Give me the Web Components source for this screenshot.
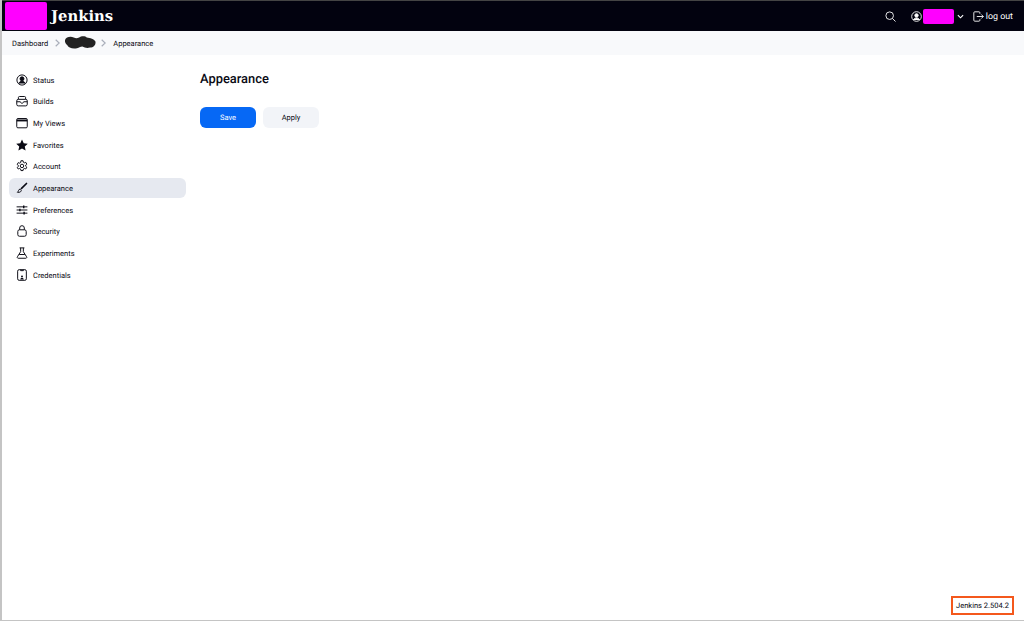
<!DOCTYPE html>
<html>
<head>
<meta charset="utf-8">
<title>Appearance - Jenkins</title>
<style>
html, body { margin: 0; height: 100%; background: #fff; }
body { font-family: Roboto, "Noto Sans", sans-serif; color: #0a0a14; text-rendering: geometricPrecision; }
</style>
</head>
<body>
<jenkins-page>
  <jenkins-header slot="header"></jenkins-header>
  <jenkins-breadcrumbs slot="crumbs"></jenkins-breadcrumbs>
  <side-nav slot="side">
    <nav-item label="Status" icon="status"></nav-item>
    <nav-item label="Builds" icon="builds"></nav-item>
    <nav-item label="My Views" icon="views"></nav-item>
    <nav-item label="Favorites" icon="star"></nav-item>
    <nav-item label="Account" icon="gear"></nav-item>
    <nav-item label="Appearance" icon="brush" active></nav-item>
    <nav-item label="Preferences" icon="sliders"></nav-item>
    <nav-item label="Security" icon="lock"></nav-item>
    <nav-item label="Experiments" icon="flask"></nav-item>
    <nav-item label="Credentials" icon="device"></nav-item>
  </side-nav>
  <appearance-form slot="main"></appearance-form>
  <version-tag slot="footer">Jenkins 2.504.2</version-tag>
</jenkins-page>

<script>
const icons = {
    status: '<circle cx="8" cy="8" r="6.800"/><circle cx="8" cy="6.400" r="2.600" fill="currentColor"/><path d="M3.600 12.800c.8-2.100 2.400-3 4.400-3s3.600.9 4.400 3" fill="currentColor"/>',
    builds: '<rect x="1" y="5.800" width="14" height="8.700" rx="2"/><path d="M3.200 5.600V3.400c0-.9.5-1.400 1.400-1.400h6.800c.9 0 1.400.5 1.400 1.400v2.200M1 9h4.800c.3 1.300 1.100 2 2.200 2s1.900-.7 2.200-2H15"/>',
    views: '<rect x="1" y="2" width="14" height="12.400" rx="1.500"/><path d="M1 4.600h14" stroke-width="2.600"/>',
    star: '<path d="M8 .6l2.300 5 5.400.6-4 3.700 1.100 5.400L8 12.600l-4.800 2.700 1.100-5.400-4-3.700 5.400-.6z" fill="currentColor" stroke="none"/>',
    gear: '<path d="M6.600 1h2.800l.4 2 1.300.8 1.900-.7 1.400 2.400-1.500 1.300v1.500l1.500 1.300-1.400 2.400-1.900-.7-1.300.8-.4 2H6.600l-.4-2-1.300-.8-1.900.7L1.600 10l1.500-1.300V7.200L1.600 5.900 3 3.500l1.900.7 1.300-.8z" stroke-linejoin="round"/><circle cx="8" cy="7.900" r="2.300"/>',
    brush: '<path d="M14 2L7.400 8.600" stroke-width="2.200" stroke-linecap="round"/><path d="M5.600 9.400c-1.400.2-2 1-2.300 2-.2.900-.6 1.700-1.500 2.300 1.700.4 3.400.1 4.400-.8.900-.8 1.100-1.800.5-2.600z" stroke-width="1.300"/>',
    sliders: '<path d="M.8 3.800h14.400M.8 8h14.400M.8 12.200h14.400"/><path d="M10.300 2v3.600M5.200 6.200v3.600M10.800 10.400V14" stroke-width="1.900"/>',
    lock: '<rect x="2.400" y="6.400" width="11.200" height="8.600" rx="2.200"/><path d="M4.900 6.400V4a3.100 3.100 0 0 1 6.200 0v2.400"/>',
    flask: '<path d="M4.800 1.200h6.400M6.200 1.200v5L1.900 13c-.6 1 0 2 1 2h10.200c1 0 1.600-1 1-2L9.800 6.200v-5M4.200 10h7.600"/>',
    device: '<rect x="2.200" y=".9" width="11.600" height="14.200" rx="2"/><path d="M6.200 1v1.200h3.600V1"/><circle cx="8" cy="9.800" r="1.300" fill="currentColor" stroke="none"/><path d="M5.600 14c.3-1.700 1.200-2.500 2.400-2.500s2.100.8 2.400 2.500z" fill="currentColor" stroke="none"/>'
}

class JenkinsPage extends HTMLElement {
    constructor() {
        super()
        this.root = this.attachShadow({mode: 'open'})
        this.root.innerHTML = `
            <style>
            :host { display: flex; flex-direction: column; height: 621px; box-sizing: border-box;
                    border-left: 2px solid #c4c4c4; border-bottom: 1px solid #c4c4c4; overflow: hidden; }
            .body { display: flex; flex: 1; min-height: 0; padding: 14.700px 0 0 7px; }
            .side { width: 177px; flex: none; }
            .main { flex: 1; padding-left: 14px; }
            .foot { display: flex; justify-content: flex-end; padding: 0 10px 5px 0; }
            </style>
            <slot name="header"></slot>
            <slot name="crumbs"></slot>
            <div class="body">
                <div class="side"><slot name="side"></slot></div>
                <div class="main"><slot name="main"></slot></div>
            </div>
            <div class="foot"><slot name="footer"></slot></div>
        `
    }
}

class JenkinsHeader extends HTMLElement {
    constructor() {
        super()
        this.root = this.attachShadow({mode: 'open'})
        this.root.innerHTML = `
            <style>
            :host { display: flex; align-items: center; height: 31px; box-sizing: border-box; flex: none;
                    background: #02020f; color: #fff; border-top: 1px solid #444; padding-left: 3px; }
            .logo { width: 42px; height: 28px; background: #ff00ff; border-radius: 2px; }
            .brand { font: bold 14.800px "DejaVu Serif", "Liberation Serif", serif; margin-left: 4px; }
            .right { margin-left: auto; display: flex; align-items: center; font-size: 8.900px; padding-right: 11px; }
            svg { display: block; fill: none; stroke: currentColor; stroke-width: 1.300; flex: none; }
            .search { margin-right: 15px; }
            .name { width: 31px; height: 15px; background: #ff00ff; border-radius: 2px; margin-left: 1px; }
            .caret { margin: 0 9px 0 3px; }
            .out { margin: 1px 0 0 2px; }
            </style>
            <div class="logo"></div>
            <div class="brand">Jenkins</div>
            <div class="right">
                <svg class="search" width="11" height="11" viewBox="0 0 16 16"><circle cx="6.800" cy="6.800" r="5.500"/><path d="M11 11l4.300 4.300"/></svg>
                <svg width="11" height="11" viewBox="0 0 16 16"><circle cx="8" cy="8" r="7"/><circle cx="8" cy="6.400" r="2.500" fill="currentColor"/><path d="M3.500 13c.8-2 2.500-3 4.500-3s3.700 1 4.500 3" fill="currentColor"/></svg>
                <div class="name"></div>
                <svg class="caret" width="7" height="7" viewBox="0 0 16 16" style="stroke-width:2.600"><path d="M2 5l6 6 6-6"/></svg>
                <svg width="11" height="11" viewBox="0 0 16 16"><path d="M10 4V2.500C10 1.700 9.500 1.200 8.700 1.200H2.500c-.8 0-1.300.5-1.300 1.300v11c0 .8.500 1.300 1.300 1.300h6.200c.8 0 1.300-.5 1.300-1.300V12M5.500 8h9.500M12 5l3 3-3 3"/></svg>
                <span class="out">log out</span>
            </div>
        `
    }
}

class JenkinsBreadcrumbs extends HTMLElement {
    constructor() {
        super()
        this.root = this.attachShadow({mode: 'open'})
        this.root.innerHTML = `
            <style>
            :host { display: flex; align-items: center; height: 24px; flex: none; background: #f8f9fb;
                    font-size: 7.500px; padding-left: 10px; color: #0a0a14; }
            svg { display: block; fill: none; stroke: #a9aeba; stroke-width: 1.200; flex: none; }
            .sep1 { margin: 0 5px 0 7px; }
            .blob { margin-right: 5px; }
            .sep2 { margin-right: 7px; }
            </style>
            <span>Dashboard</span>
            <svg class="sep1" width="5" height="8" viewBox="0 0 5 8"><path d="M.7.7L4.200 4 .7 7.300"/></svg>
            <svg class="blob" width="31" height="16" viewBox="1 0 28.500 16" preserveAspectRatio="none" style="stroke:none"><path d="M1 5c1-3 5-4 8-2.500 2 1 3 1 5 0 2-1.800 6-1.500 7 0 3 .5 7 1.500 8 4 .5 3-1.500 6-5 6-3 1-5 0-7-1-2 0-3 1.500-6 2-4 .5-7-1-8-3.500C2 9 .5 7 1 5z" fill="#222"/></svg>
            <svg class="sep2" width="5" height="8" viewBox="0 0 5 8"><path d="M.7.7L4.200 4 .7 7.300"/></svg>
            <span>Appearance</span>
        `
    }
}

class SideNav extends HTMLElement {
    constructor() {
        super()
        this.root = this.attachShadow({mode: 'open'})
        this.root.innerHTML = `
            <style>:host { display: flex; flex-direction: column; gap: 1.670px; }</style>
            <slot></slot>
        `
    }
}

class NavItem extends HTMLElement {
    constructor() {
        super()
        this.root = this.attachShadow({mode: 'open'})
    }

    connectedCallback() {
        this.root.innerHTML = `
            <style>
            :host { display: flex; align-items: center; height: 20px; border-radius: 6px;
                    padding-left: 7px; font-size: 7.500px; color: #0a0a14; }
            :host([active]) { background: #e6e9f0; }
            svg { display: block; fill: none; stroke: currentColor; stroke-width: 1.300; margin-right: 5px; flex: none; }
            span { margin-top: 1px; }
            </style>
            <svg width="12" height="12" viewBox="0 0 16 16">${icons[this.getAttribute('icon')]}</svg>
            <span>${this.getAttribute('label')}</span>
        `
    }
}

class AppearanceForm extends HTMLElement {
    constructor() {
        super()
        this.root = this.attachShadow({mode: 'open'})
        this.root.innerHTML = `
            <style>
            :host { display: block; }
            h1 { margin: 1px 0 18.500px; font: 500 12.900px/18px Roboto, "Noto Sans", sans-serif; color: #0a0a14; }
            .buttons { display: flex; gap: 7px; }
            button { width: 56px; height: 20.500px; border: 0; border-radius: 6px; padding: 0;
                     font: 400 7.500px Roboto, "Noto Sans", sans-serif; text-rendering: geometricPrecision; }
            .save { background: #0668f5; color: #fff; }
            .apply { background: #f2f4f8; color: #0a0a14; }
            </style>
            <h1>Appearance</h1>
            <div class="buttons">
                <button class="save">Save</button>
                <button class="apply">Apply</button>
            </div>
        `
    }
}

class VersionTag extends HTMLElement {
    constructor() {
        super()
        this.root = this.attachShadow({mode: 'open'})
        this.root.innerHTML = `
            <style>
            :host { display: block; border: 2px solid #f4581c; width: 59px; height: 15px;
                    font-size: 7.500px; line-height: 15px; text-align: center; white-space: nowrap; color: #0a0a14; }
            </style>
            <slot></slot>
        `
    }
}

customElements.define('jenkins-page', JenkinsPage)
customElements.define('jenkins-header', JenkinsHeader)
customElements.define('jenkins-breadcrumbs', JenkinsBreadcrumbs)
customElements.define('side-nav', SideNav)
customElements.define('nav-item', NavItem)
customElements.define('appearance-form', AppearanceForm)
customElements.define('version-tag', VersionTag)
</script>
</body>
</html>
